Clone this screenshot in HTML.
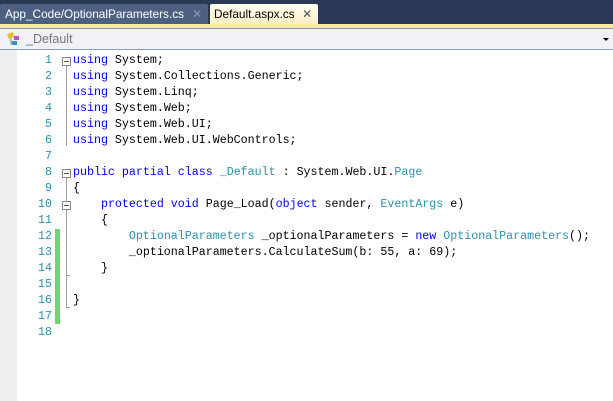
<!DOCTYPE html>
<html><head><style>
body{margin:0;width:613px;height:401px;overflow:hidden;background:#fff;font-family:"Liberation Sans",sans-serif;position:relative}
.top{position:absolute;left:0;top:0;width:613px;height:24px;background:#293955}
.t1{position:absolute;left:0;top:4px;width:208px;height:20px;background:#4d6082;color:#fff;font-size:11.8px;line-height:21px;padding-left:5px;box-sizing:border-box;border-radius:2px 2px 0 0}
.t2{position:absolute;left:210px;top:4px;width:108px;height:21px;background:linear-gradient(#fffcf4,#fdeec0);color:#000;font-size:11.8px;line-height:21px;padding-left:4px;box-sizing:border-box;border-radius:2px 2px 0 0}
.x{position:absolute;right:6px;top:0;color:#8a99b5}
.t2 .x{color:#555}
.ys{position:absolute;left:0;top:24px;width:613px;height:4px;background:#fde9a8}
.dd{position:absolute;left:0;top:28px;width:613px;height:22px;background:#f1f2f8;border-top:1px solid #8e9bb6;border-bottom:1px solid #8e9bb6;box-sizing:border-box}
.dd span{position:absolute;left:26px;top:3px;font-size:12.5px;color:#777}
.gut{position:absolute;left:0;top:50px;width:17px;height:351px;background:#efeff2}
.code{position:absolute;left:0;top:53px;font-family:"Liberation Mono",monospace;font-size:11.65px}
.l{height:16px;line-height:16px;white-space:pre;position:relative}
.n{position:absolute;left:20px;width:32px;text-align:right;color:#2b91af}
.c{position:absolute;left:73px}
.k{color:#00f}.t{color:#2b91af}
.green{position:absolute;left:55px;top:229px;width:5px;height:95px;background:#6ed46e}
.fold{position:absolute;width:7px;height:7px;border:1px solid #888;background:#fff}
.fold:after{content:"";position:absolute;left:1px;top:3px;width:5px;height:1px;background:#555}
.vl{position:absolute;width:1px;background:#a0a0a0;left:66px}
</style></head><body>
<div class="top"></div>
<div class="t1">App_Code/OptionalParameters.cs<span class="x">✕</span></div>
<div class="t2">Default.aspx.cs<span class="x">✕</span></div>
<div class="ys"></div>
<div class="dd"><svg style="position:absolute;left:6px;top:3px" width="16" height="14"><rect x="2" y="1" width="6" height="5" fill="#e8b83a" transform="rotate(-20 5 4)"/><rect x="8" y="4" width="5" height="4" fill="#c050c0"/><rect x="6" y="9" width="5" height="4" fill="#3a8ad0"/><path d="M5 6v6h2" stroke="#888" fill="none"/></svg><span>_Default</span><svg style="position:absolute;right:4px;top:9px" width="6" height="4"><path d="M0 0h6l-3 3z" fill="#000"/></svg></div>
<div class="gut"></div>
<div class="green"></div>
<div class="fold" style="left:62px;top:57px"></div>
<div class="vl" style="top:66px;height:80px"></div>
<div class="fold" style="left:62px;top:169px"></div>
<div class="vl" style="top:178px;height:130px"></div>
<div class="fold" style="left:62px;top:201px"></div>
<div style="position:absolute;left:66px;top:307px;width:4px;height:1px;background:#a0a0a0"></div>
<div style="position:absolute;left:66px;top:275px;width:4px;height:1px;background:#a0a0a0"></div>
<div class="code">
<div class="l"><span class="n">1</span><span class="c"><span class="k">using</span> System;</span></div>
<div class="l"><span class="n">2</span><span class="c"><span class="k">using</span> System.Collections.Generic;</span></div>
<div class="l"><span class="n">3</span><span class="c"><span class="k">using</span> System.Linq;</span></div>
<div class="l"><span class="n">4</span><span class="c"><span class="k">using</span> System.Web;</span></div>
<div class="l"><span class="n">5</span><span class="c"><span class="k">using</span> System.Web.UI;</span></div>
<div class="l"><span class="n">6</span><span class="c"><span class="k">using</span> System.Web.UI.WebControls;</span></div>
<div class="l"><span class="n">7</span></div>
<div class="l"><span class="n">8</span><span class="c"><span class="k">public partial class</span> <span class="t">_Default</span> : System.Web.UI.<span class="t">Page</span></span></div>
<div class="l"><span class="n">9</span><span class="c">{</span></div>
<div class="l"><span class="n">10</span><span class="c">    <span class="k">protected void</span> Page_Load(<span class="k">object</span> sender, <span class="t">EventArgs</span> e)</span></div>
<div class="l"><span class="n">11</span><span class="c">    {</span></div>
<div class="l"><span class="n">12</span><span class="c">        <span class="t">OptionalParameters</span> _optionalParameters = <span class="k">new</span> <span class="t">OptionalParameters</span>();</span></div>
<div class="l"><span class="n">13</span><span class="c">        _optionalParameters.CalculateSum(b: 55, a: 69);</span></div>
<div class="l"><span class="n">14</span><span class="c">    }</span></div>
<div class="l"><span class="n">15</span></div>
<div class="l"><span class="n">16</span><span class="c">}</span></div>
<div class="l"><span class="n">17</span></div>
<div class="l"><span class="n">18</span></div>
</div>
</body></html>
